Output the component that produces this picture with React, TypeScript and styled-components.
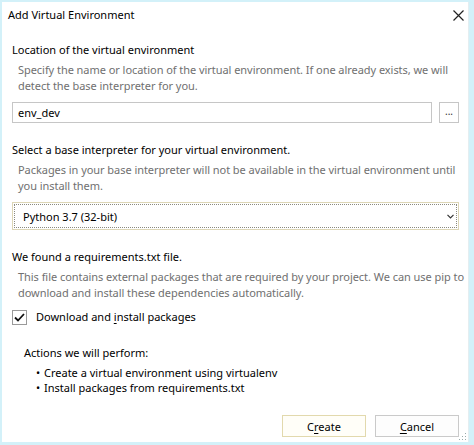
import React from "react";
import styled, { createGlobalStyle } from "styled-components";

const GlobalStyle = createGlobalStyle`
  html, body {
    margin: 0;
    padding: 0;
    background: #d3f1f9;
  }
  body {
    font-family: "Noto Sans", "Open Sans", sans-serif;
    font-size: 11px;
    color: #1e1e1e;
  }
`;

const Frame = styled.div`
  width: 474px;
  height: 445px;
  box-sizing: border-box;
  padding: 2px 5px 3px 2px;
  background: #d3f1f9;
  display: flex;
`;

const Window = styled.div`
  position: relative;
  flex: 1;
  background: #fff;
  border-right: 1px solid #e4eef1;
  display: flex;
  flex-direction: column;
  overflow: hidden;
`;

const TitleBar = styled.div`
  flex-shrink: 0;
  height: 26px;
  display: flex;
  align-items: center;
  justify-content: space-between;
  padding: 0 4px 0 6px;
`;

const Title = styled.span`
  line-height: 16px;
  color: #000;
`;

const CloseIcon = styled.svg`
  width: 11px;
  height: 11px;
`;

const Body = styled.div`
  flex: 1;
  display: flex;
  flex-direction: column;
  padding: 0 9px 5px 10px;
`;

const Heading = styled.div<{ $top: number }>`
  margin-top: ${(p) => p.$top}px;
  line-height: 16px;
  color: #000;
  white-space: nowrap;
`;

const Hint = styled.div`
  margin-top: 4px;
  padding-left: 6px;
  line-height: 16px;
  color: #707070;
  white-space: nowrap;
  letter-spacing: -0.05px;
`;

const InputRow = styled.div`
  margin-top: 8px;
  display: flex;
  gap: 7px;
  align-items: center;
`;

const TextInput = styled.div`
  width: 421px;
  height: 21px;
  box-sizing: border-box;
  border: 1px solid #c6c6c6;
  padding: 0 5px;
  display: flex;
  align-items: center;
  color: #000;
`;

const BrowseButton = styled.div`
  width: 20px;
  height: 21px;
  box-sizing: border-box;
  border: 1px solid #c6c6c6;
  display: flex;
  align-items: center;
  justify-content: center;
  font-size: 10px;
  line-height: 10px;
  color: #333;
  padding-bottom: 3px;
`;

const Select = styled.div`
  margin-top: 8px;
  height: 28px;
  box-sizing: border-box;
  border: 1px solid #ddd6b6;
  outline: 1px dotted #8a8a80;
  outline-offset: -3px;
  padding: 0 4px 0 10px;
  display: flex;
  align-items: center;
  justify-content: space-between;
  color: #000;
`;

const Chevron = styled.svg`
  width: 7px;
  height: 5px;
`;

const CheckRow = styled.label`
  margin-top: 8px;
  display: flex;
  align-items: center;
  gap: 9px;
  line-height: 16px;
  color: #000;
`;

const CheckBox = styled.span`
  width: 15px;
  height: 15px;
  box-sizing: border-box;
  border: 1px solid #9a9a9a;
  display: flex;
  align-items: center;
  justify-content: center;
`;

const Key = styled.span`
  text-decoration: underline;
  text-underline-offset: 2px;
`;

const Actions = styled.div`
  margin-top: 20px;
  padding-left: 12px;
  line-height: 16px;
  color: #000;
`;

const BulletList = styled.ul`
  list-style: none;
  margin: 4px 0 0;
  padding: 0 0 0 12px;
  line-height: 15px;

  li::before {
    content: "•";
    display: inline-block;
    width: 8px;
  }
`;

const Footer = styled.div`
  margin-top: auto;
  display: flex;
  justify-content: flex-end;
  gap: 9px;
`;

const Button = styled.div<{ $primary?: boolean }>`
  width: 84px;
  height: 22px;
  box-sizing: border-box;
  border: 1px solid ${(p) => (p.$primary ? "#e2d9ad" : "#cacaca")};
  background: ${(p) => (p.$primary ? "#fffef8" : "#fdfdfd")};
  display: flex;
  align-items: center;
  justify-content: center;
  color: #000;
`;

const Grip = styled.svg`
  position: absolute;
  right: 1px;
  bottom: 1px;
  width: 10px;
  height: 10px;
`;

const App: React.FC = () => {
  return (
    <Frame>
      <GlobalStyle />
      <Window>
        <TitleBar>
          <Title>Add Virtual Environment</Title>
          <CloseIcon viewBox="0 0 11 11">
            <path d="M0.5 0.5 L10.5 10.5 M10.5 0.5 L0.5 10.5" stroke="#222" strokeWidth="1.2" />
          </CloseIcon>
        </TitleBar>

        <Body>
          <Heading $top={14}>Location of the virtual environment</Heading>
          <Hint>
            Specify the name or location of the virtual environment. If one already exists, we will
            <br />
            detect the base interpreter for you.
          </Hint>
          <InputRow>
            <TextInput>env_dev</TextInput>
            <BrowseButton>...</BrowseButton>
          </InputRow>

          <Heading $top={19}>Select a base interpreter for your virtual environment.</Heading>
          <Hint>
            Packages in your base interpreter will not be available in the virtual environment until
            <br />
            you install them.
          </Hint>
          <Select>
            <span>Python 3.7 (32-bit)</span>
            <Chevron viewBox="0 0 7 5">
              <path d="M0.5 0.8 L3.5 3.8 L6.5 0.8" stroke="#333" strokeWidth="1.2" fill="none" />
            </Chevron>
          </Select>

          <Heading $top={19}>We found a requirements.txt file.</Heading>
          <Hint>
            This file contains external packages that are required by your project. We can use pip to
            <br />
            download and install these dependencies automatically.
          </Hint>
          <CheckRow>
            <CheckBox>
              <svg width="11" height="9" viewBox="0 0 11 9">
                <path d="M1 4.5 L4 7.5 L10 1" stroke="#111" strokeWidth="1.8" fill="none" />
              </svg>
            </CheckBox>
            <span>
              Download and <Key>i</Key>nstall packages
            </span>
          </CheckRow>

          <Actions>
            Actions we will perform:
            <BulletList>
              <li>Create a virtual environment using virtualenv</li>
              <li>Install packages from requirements.txt</li>
            </BulletList>
          </Actions>

          <Footer>
            <Button $primary>
              <span>
                C<Key>r</Key>eate
              </span>
            </Button>
            <Button>
              <span>
                <Key>C</Key>ancel
              </span>
            </Button>
          </Footer>
        </Body>

        <Grip viewBox="0 0 10 10">
          {[
            [8, 2],
            [8, 5],
            [8, 8],
            [5, 5],
            [5, 8],
            [2, 8],
          ].map(([x, y]) => (
            <rect key={`${x}-${y}`} x={x} y={y} width="1" height="1" fill="#9aa" />
          ))}
        </Grip>
      </Window>
    </Frame>
  );
};

export default App;
